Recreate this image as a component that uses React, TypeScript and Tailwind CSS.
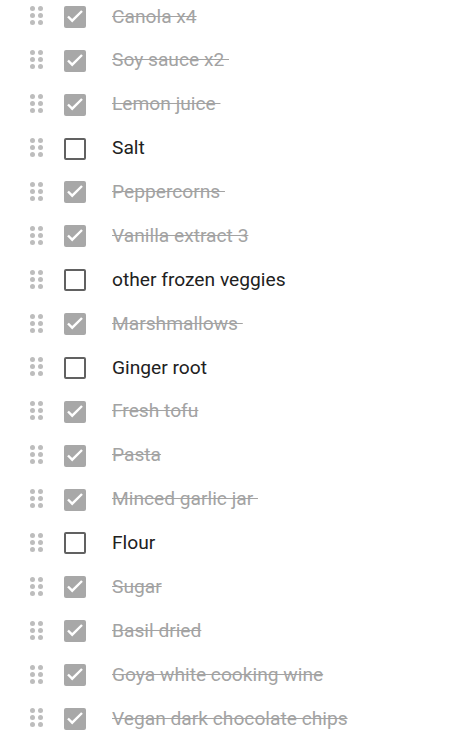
const ITEMS = [
  { name: 'Canola x4', done: true },
  { name: 'Soy sauce x2 ', done: true },
  { name: 'Lemon juice ', done: true },
  { name: 'Salt', done: false },
  { name: 'Peppercorns ', done: true },
  { name: 'Vanilla extract 3', done: true },
  { name: 'other frozen veggies', done: false },
  { name: 'Marshmallows ', done: true },
  { name: 'Ginger root', done: false },
  { name: 'Fresh tofu', done: true },
  { name: 'Pasta', done: true },
  { name: 'Minced garlic jar ', done: true },
  { name: 'Flour', done: false },
  { name: 'Sugar', done: true },
  { name: 'Basil dried', done: true },
  { name: 'Goya white cooking wine', done: true },
  { name: 'Vegan dark chocolate chips', done: true },
];

function DragHandle() {
  return (
    <div className="grid grid-cols-2 gap-x-[3px] gap-y-[2px] w-[13px] shrink-0 -mt-[2px]">
      {Array.from({ length: 6 }).map((_, i) => (
        <span key={i} className="block w-[5px] h-[5px] rounded-full bg-[#bdbdbd]" />
      ))}
    </div>
  );
}

function Checkbox({ checked }: { checked: boolean }) {
  if (checked) {
    return (
      <div className="w-[22px] h-[22px] rounded-[2px] bg-[#a8a8a8] shrink-0">
        <svg width="22" height="22" viewBox="0 0 22 22" fill="none" stroke="white" strokeWidth="2.4">
          <path d="M4 10.5l4.2 4.2L18 5" />
        </svg>
      </div>
    );
  }
  return <div className="w-[22px] h-[22px] rounded-[2px] border-2 border-[#616161] shrink-0" />;
}

export default function App() {
  return (
    <div className="w-[474px] h-[732px] bg-white overflow-hidden font-['Roboto','Liberation_Sans',sans-serif]">
      <div className="-mt-[5px]">
        {ITEMS.map((item, i) => (
          <div key={i} className="h-[43.875px] flex items-center">
            <div className="pl-[30px] w-[64px]">
              <DragHandle />
            </div>
            <Checkbox checked={item.done} />
            <span
              className={`ml-[26px] text-[19.2px] whitespace-pre ${
                item.done ? 'text-[#a3a3a3] line-through decoration-[#a3a3a3]' : 'text-[#212121]'
              }`}
            >
              {item.name}
            </span>
          </div>
        ))}
      </div>
    </div>
  );
}
